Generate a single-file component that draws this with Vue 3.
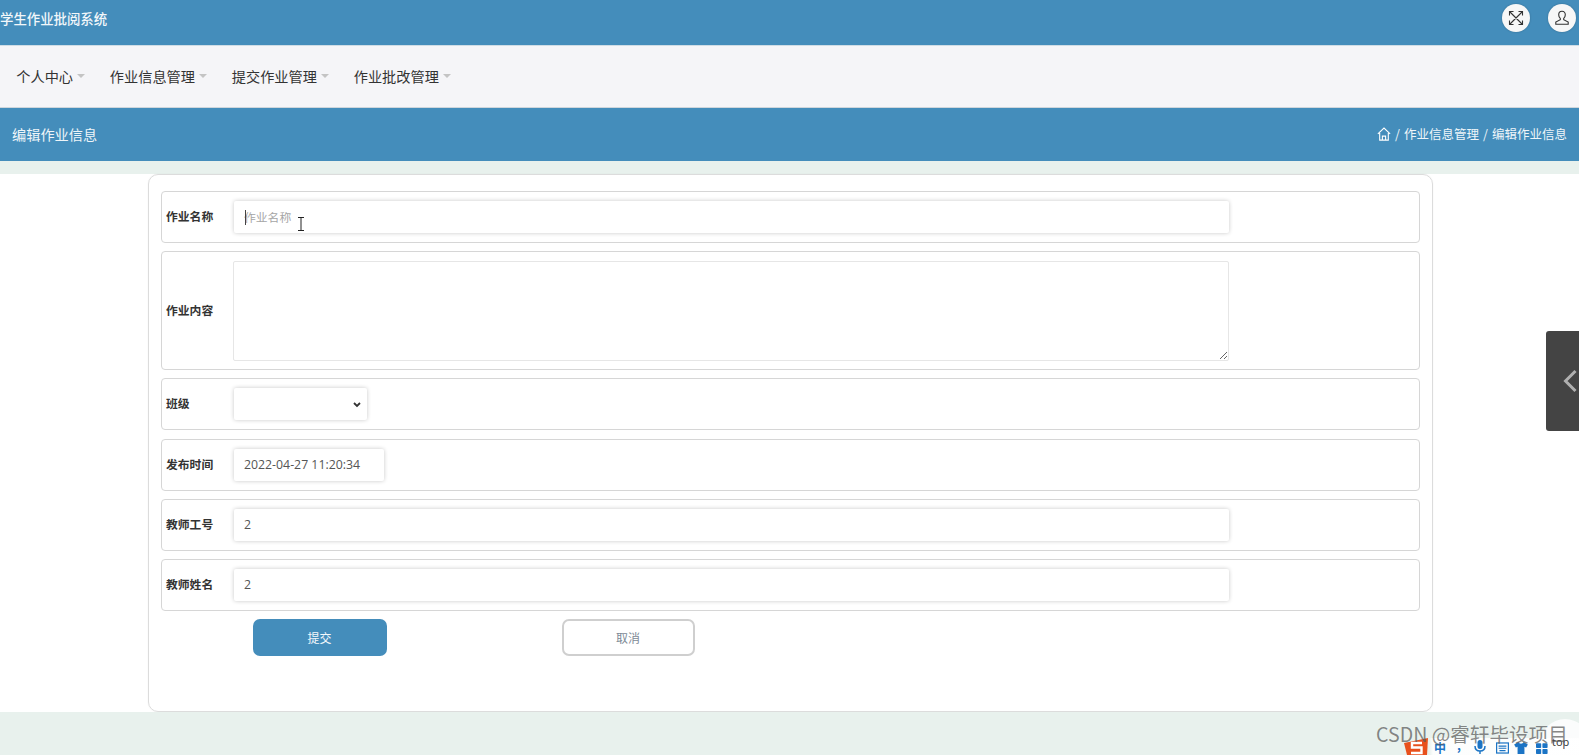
<script setup>
const navItems = ['个人中心', '作业信息管理', '提交作业管理', '作业批改管理']
const rows = [
  { label: '教师工号', value: '2' },
  { label: '教师姓名', value: '2' },
]
</script>

<template>
  <div class="page">
    <header class="top">
      <div class="brand">学生作业批阅系统</div>
      <div class="top-actions">
        <button class="round" aria-label="全屏">
          <svg width="18" height="18" viewBox="0 0 18 18" fill="none" stroke="#333" stroke-width="1.1">
            <path d="M3 3l12 12M15 3L3 15M2.500 6.500v-4h4M11.500 2.500h4v4M2.500 11.500v4h4M11.500 15.500h4v-4" />
          </svg>
        </button>
        <button class="round" aria-label="用户">
          <svg width="18" height="18" viewBox="0 0 18 18" fill="none" stroke="#333" stroke-width="1.100">
            <path d="M9 2.200c-2.200 0-3.300 1.600-3.300 3.500 0 1.500.7 2.900 1.600 3.700v1.300L2.800 13v2.300h12.400V13l-4.500-2.300V9.400c.9-.8 1.600-2.200 1.600-3.700 0-1.900-1.100-3.500-3.300-3.500z" />
          </svg>
        </button>
      </div>
    </header>

    <nav class="menu">
      <div v-for="item in navItems" :key="item" class="menu-item">
        <span>{{ item }}</span><i class="caret"></i>
      </div>
    </nav>

    <section class="titlebar">
      <h1>编辑作业信息</h1>
      <div class="crumbs">
        <svg width="14" height="14" viewBox="0 0 13 13" fill="none" stroke="#fff" stroke-width="1">
          <path d="M.8 6.300L6.500 1l5.700 5.300M2.500 5.500v6.700h8V5.500M5 12.200V8.500h3v3.700" />
        </svg>
        <span>/ 作业信息管理 / 编辑作业信息</span>
      </div>
    </section>

    <div class="mint-strip"></div>

    <main class="body">
      <form class="card" @submit.prevent>
        <div class="row">
          <label>作业名称</label>
          <div class="name-wrap">
            <input class="field wide" placeholder="作业名称" />
            <i class="text-caret"></i>
            <svg class="ibeam" width="8" height="14" viewBox="0 0 8 14" fill="none" stroke="#222" stroke-width="1">
              <path d="M1 .5h6M4 .5v13M1 13.500h6" />
            </svg>
          </div>
        </div>
        <div class="row">
          <label>作业内容</label>
          <textarea class="area"></textarea>
        </div>
        <div class="row">
          <label>班级</label>
          <div class="pick-wrap">
            <select class="field pick"><option></option></select>
            <svg class="pick-arrow" width="8" height="6" viewBox="0 0 8 6" fill="none" stroke="#333" stroke-width="1.800">
              <path d="M1 1l3 3 3-3" />
            </svg>
          </div>
        </div>
        <div class="row">
          <label>发布时间</label>
          <input class="field date" value="2022-04-27 11:20:34" />
        </div>
        <div v-for="r in rows" :key="r.label" class="row">
          <label>{{ r.label }}</label>
          <input class="field wide" :value="r.value" />
        </div>
        <div class="actions">
          <button class="btn primary">提交</button>
          <button class="btn ghost" type="button">取消</button>
        </div>
      </form>
    </main>

    <footer class="foot"></footer>

    <div class="side-tab">
      <svg width="14" height="24" viewBox="0 0 14 24" fill="none" stroke="#b0b0b0" stroke-width="3">
        <path d="M12.500 2L2.500 12l10 10" />
      </svg>
    </div>

    <div class="to-top"></div>
    <div class="ime">
      <svg class="ime-logo" width="26" height="17" viewBox="0 0 26 17">
        <path d="M1 5L25 0l-1 17H4z" fill="#e8501c" />
        <path d="M19 5H9v4.500h9.500V15H8" fill="none" stroke="#fff" stroke-width="2.400" />
      </svg>
      <span class="ime-zh">中</span>
      <span class="ime-dot">,</span>
      <svg class="ime-mic" width="12" height="15" viewBox="0 0 12 15" fill="#1b74c5">
        <rect x="3.500" y="0" width="5" height="9" rx="2.500" />
        <path d="M1 6c0 3 2 5 5 5s5-2 5-5" fill="none" stroke="#1b74c5" stroke-width="1.500" />
        <path d="M5.300 11h1.400v3h-1.400z" />
      </svg>
      <svg class="ime-kb" width="13" height="12" viewBox="0 0 15 13" fill="none" stroke="#1b74c5" stroke-width="1.400">
        <rect x=".7" y=".7" width="13.600" height="11.600" />
        <path d="M3 4.300h9M3 6.800h9M4 9.600h7" />
      </svg>
      <svg class="ime-shirt" width="14" height="12" viewBox="0 0 16 14" fill="#1b74c5">
        <path d="M5 0L0 3l2 3.500 2-1V14h8V5.500l2 1L16 3l-5-3c-.5 1.500-1.500 2-3 2S5.500 1.500 5 0z" />
      </svg>
      <svg class="ime-grid" width="12" height="13" viewBox="0 0 15 15" fill="#1b74c5">
        <rect x="0" y="8" width="6.500" height="6.500" rx="1" />
        <rect x="8" y="8" width="6.500" height="6.500" rx="1" />
        <rect x="0" y="1" width="6.500" height="6" rx="1" />
        <rect x="8" y="1" width="6.500" height="6" rx="1" />
      </svg>
    </div>
    <div class="top-label">top</div>
    <div class="watermark">CSDN @睿轩毕设项目</div>
  </div>
</template>

<style>
html, body { margin: 0; overflow: hidden; background: #e8f1ed; }
</style>

<style scoped>
.page {
  width: 1579px;
  height: 755px;
  position: relative;
  overflow: hidden;
  display: flex;
  flex-direction: column;
  font-family: "Noto Sans CJK SC", "Open Sans", sans-serif;
  background: #e8f1ed;
}
.top {
  height: 45px;
  flex: none;
  background: #448dbb;
  display: flex;
  justify-content: space-between;
  align-items: flex-start;
  box-sizing: border-box;
  color: #fff;
}
.brand { font-size: 13.400px; line-height: 37px; font-weight: 500; color: #f2f7fa; }
.top-actions { display: flex; gap: 18px; padding: 4px 3px 0 0; }
.round {
  width: 28px;
  height: 28px;
  border: none;
  border-radius: 50%;
  background: #f7f7f7;
  box-shadow: 0 0 2px rgba(0, 0, 0, .25);
  padding: 0;
  display: flex;
  align-items: center;
  justify-content: center;
}
.menu {
  height: 63px;
  flex: none;
  background: #f5f5f8;
  border-top: 1px solid #cfdde6;
  border-bottom: 1px solid #cfd6dc;
  box-sizing: border-box;
  display: flex;
  align-items: center;
  padding: 0 0 1px 16.300px;
  gap: 24.800px;
}
.menu-item { display: flex; align-items: center; font-size: 14.200px; color: #333; }
.caret {
  width: 0;
  height: 0;
  margin-left: 4px;
  border-left: 4px solid transparent;
  border-right: 4px solid transparent;
  border-top: 4px solid #c4c4c4;
}
.titlebar {
  height: 53px;
  flex: none;
  background: #448dbb;
  display: flex;
  align-items: center;
  justify-content: space-between;
  padding: 0 12px 2px;
  box-sizing: border-box;
  color: #eef5f9;
}
.titlebar h1 { margin: 0; font-size: 14.200px; font-weight: 400; }
.crumbs { display: flex; align-items: center; gap: 4px; font-size: 12.500px; word-spacing: 1.300px; }
.mint-strip { height: 13px; flex: none; background: #e8f1ed; }
.body {
  height: 538px;
  flex: none;
  background: #fff;
  padding-left: 148px;
}
.card {
  width: 1285px;
  height: 538px;
  box-sizing: border-box;
  border: 1px solid #dcdcdc;
  border-radius: 10px;
  padding: 16px 12px 0;
  box-shadow: 0 0 2px rgba(0, 0, 0, .05);
}
.row {
  min-height: 52px;
  box-sizing: border-box;
  border: 1px solid #d6d6d6;
  border-radius: 4px;
  margin-bottom: 8.200px;
  padding: 8.500px 0 8.500px 4px;
  display: flex;
  align-items: center;
}
.row label {
  width: 68px;
  flex: none;
  font-size: 11.800px;
  line-height: 16px;
  margin-top: -2px;
  font-weight: 700;
  color: #333;
}
.name-wrap, .pick-wrap { position: relative; display: flex; }
.field {
  height: 32px;
  box-sizing: border-box;
  border: none;
  border-radius: 2px;
  background: #fff;
  box-shadow: 0 0 4px rgba(0, 0, 0, .22);
  padding: 0 10px;
  font-family: "Open Sans", "Noto Sans CJK SC", sans-serif;
  font-size: 12.300px;
  color: #555;
  outline: none;
}
.field::placeholder { color: #a5a5a5; font-size: 11.800px; font-family: "Noto Sans CJK SC", sans-serif; }
.wide { width: 995px; display: block; }
.date { width: 150px; }
.pick { width: 133px; padding: 0 6px; color: #333; appearance: none; }
.pick-arrow { position: absolute; right: 6px; top: 14px; }
.area {
  width: 996px;
  height: 100px;
  margin-left: -1px;
  box-sizing: border-box;
  border: 1px solid #e6e6e6;
  border-radius: 2px;
  background: #fff;
  outline: none;
  display: block;
}
.text-caret {
  position: absolute;
  left: 10.500px;
  top: 9px;
  width: 1px;
  height: 15px;
  background: #444;
}
.ibeam { position: absolute; left: 63px; top: 16px; }
.actions { display: flex; gap: 175px; padding-left: 91.500px; }
.btn {
  width: 134px;
  height: 37px;
  box-sizing: border-box;
  border-radius: 7px;
  font-family: "Noto Sans CJK SC", sans-serif;
  font-size: 12px;
  padding: 0;
}
.primary { background: #448dbb; border: none; color: #f4f8fb; }
.ghost { background: #fff; border: 2px solid #cfcfcf; color: #7d8a96; width: 133px; }
.foot { flex: 1; background: #e8f1ed; }

.side-tab {
  position: absolute;
  left: 1546px;
  top: 331px;
  width: 33px;
  height: 100px;
  background: #444;
  border-radius: 3px 0 0 3px;
  display: flex;
  align-items: center;
  justify-content: flex-end;
  padding-right: 2px;
  box-sizing: border-box;
}
.to-top {
  position: absolute;
  left: 1540px;
  top: 719px;
  width: 50px;
  height: 50px;
  border-radius: 50%;
  background: rgba(255, 255, 255, .8);
}
.ime {
  position: absolute;
  left: 1403px;
  top: 738px;
  height: 17px;
  width: 176px;
  overflow: hidden;
  display: flex;
  align-items: flex-start;
  background: linear-gradient(to right, transparent 26px, rgba(255, 255, 255, .9) 30px);
}
.ime svg { flex: none; }
.ime-zh { color: #1b74c5; font-size: 12px; line-height: 13px; font-weight: 700; width: 12px; margin: 3px 0 0 5px; }
.ime-dot { color: #1b74c5; font-size: 12px; line-height: 11px; font-weight: 700; width: 6px; margin: 1px 0 0 11px; }
.ime-mic { margin: 2px 0 0 11px; }
.ime-kb { margin: 4px 0 0 10px; }
.ime-shirt { margin: 4px 0 0 5px; }
.ime-grid { margin: 4px 0 0 8px; }
.top-label {
  position: absolute;
  left: 1552px;
  top: 734px;
  font: 11px/16px "Open Sans", sans-serif;
  color: #333;
}
.watermark {
  position: absolute;
  left: 1376px;
  top: 721px;
  font-size: 19.600px;
  line-height: 26px;
  color: rgba(90, 90, 90, .72);
  white-space: nowrap;
}
</style>
